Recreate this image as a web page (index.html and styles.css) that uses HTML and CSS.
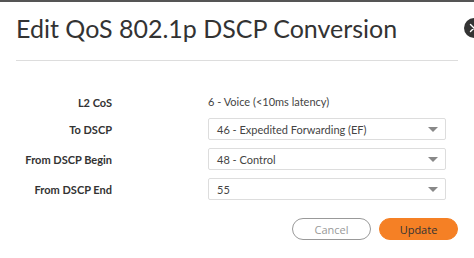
FILE: index.html
```html
<!DOCTYPE html>
<html lang="en">
<head>
  <meta charset="UTF-8">
  <meta name="viewport" content="width=device-width, initial-scale=1.0">
  <title>Edit QoS 802.1p DSCP Conversion</title>
  <link rel="stylesheet" href="styles.css">
</head>
<body>
  <div class="dialog">
    <header class="dialog-head">
      <h1>Edit QoS 802.1p DSCP Conversion</h1>
      <button class="close" type="button" aria-label="Close">
        <svg width="20" height="20" viewBox="0 0 20 20">
          <circle cx="10" cy="10" r="10" fill="#333"/>
          <path d="M6.5 6.5 L13.5 13.5 M13.5 6.5 L6.5 13.5" stroke="#fff" stroke-width="1.4" stroke-linecap="round"/>
        </svg>
      </button>
    </header>

    <form class="dialog-body">
      <label class="field-label">L2 CoS</label>
      <span class="field-value">6 - Voice (&lt;10ms latency)</span>

      <label class="field-label" for="to-dscp">To DSCP</label>
      <div class="select" id="to-dscp">
        <span>46 - Expedited Forwarding (EF)</span>
        <i class="caret"></i>
      </div>

      <label class="field-label" for="dscp-begin">From DSCP Begin</label>
      <div class="select" id="dscp-begin">
        <span>48 - Control</span>
        <i class="caret"></i>
      </div>

      <label class="field-label" for="dscp-end">From DSCP End</label>
      <div class="select" id="dscp-end">
        <span>55</span>
        <i class="caret"></i>
      </div>
    </form>

    <footer class="dialog-foot">
      <button class="btn btn-cancel" type="button">Cancel</button>
      <button class="btn btn-update" type="button">Update</button>
    </footer>
  </div>
</body>
</html>
```

FILE: styles.css
```css
body {
  margin: 0;
  background: #fff;
  font-family: Lato, 'Open Sans', sans-serif;
  color: #333;
}
.dialog {
  position: relative;
  height: 256px;
  border-top: 2px solid #555;
  overflow: hidden;
}
.dialog-head {
  margin: 0 16px;
  height: 59px;
  border-bottom: 1px solid #ddd;
  box-sizing: border-box;
}
.dialog-head h1 {
  margin: 0;
  padding-top: 11px;
  font-size: 25px;
  font-weight: normal;
  line-height: 30px;
  color: #333;
}
.close {
  position: absolute;
  top: 16px;
  right: -10px;
  width: 20px;
  height: 20px;
  padding: 0;
  border: none;
  background: none;
}
.close svg {
  display: block;
}
.dialog-body {
  display: grid;
  grid-template-columns: 112px 238px;
  column-gap: 96px;
  row-gap: 8px;
  align-items: center;
  padding-top: 33px;
  font-size: 11px;
}
.field-label {
  text-align: right;
  font-weight: bold;
  color: #333;
}
.field-value {
  color: #444;
  line-height: 16px;
}
.select {
  display: flex;
  align-items: center;
  justify-content: space-between;
  height: 22px;
  padding: 0 7px 0 8px;
  border: 1px solid #ddd;
  border-radius: 2px;
  box-sizing: border-box;
  color: #444;
}
.caret {
  width: 0;
  height: 0;
  border-left: 5px solid transparent;
  border-right: 5px solid transparent;
  border-top: 5px solid #888;
}
.dialog-foot {
  display: flex;
  justify-content: flex-end;
  gap: 8px;
  margin: 18px 16px 0 0;
}
.btn {
  width: 79px;
  height: 22px;
  border-radius: 11px;
  font-family: 'Open Sans', sans-serif;
  font-size: 11px;
  box-sizing: border-box;
}
.btn-cancel {
  background: #fff;
  border: 1px solid #999;
  color: #999;
}
.btn-update {
  background: #f58025;
  border: 1px solid #f58025;
  color: #333;
}
```
